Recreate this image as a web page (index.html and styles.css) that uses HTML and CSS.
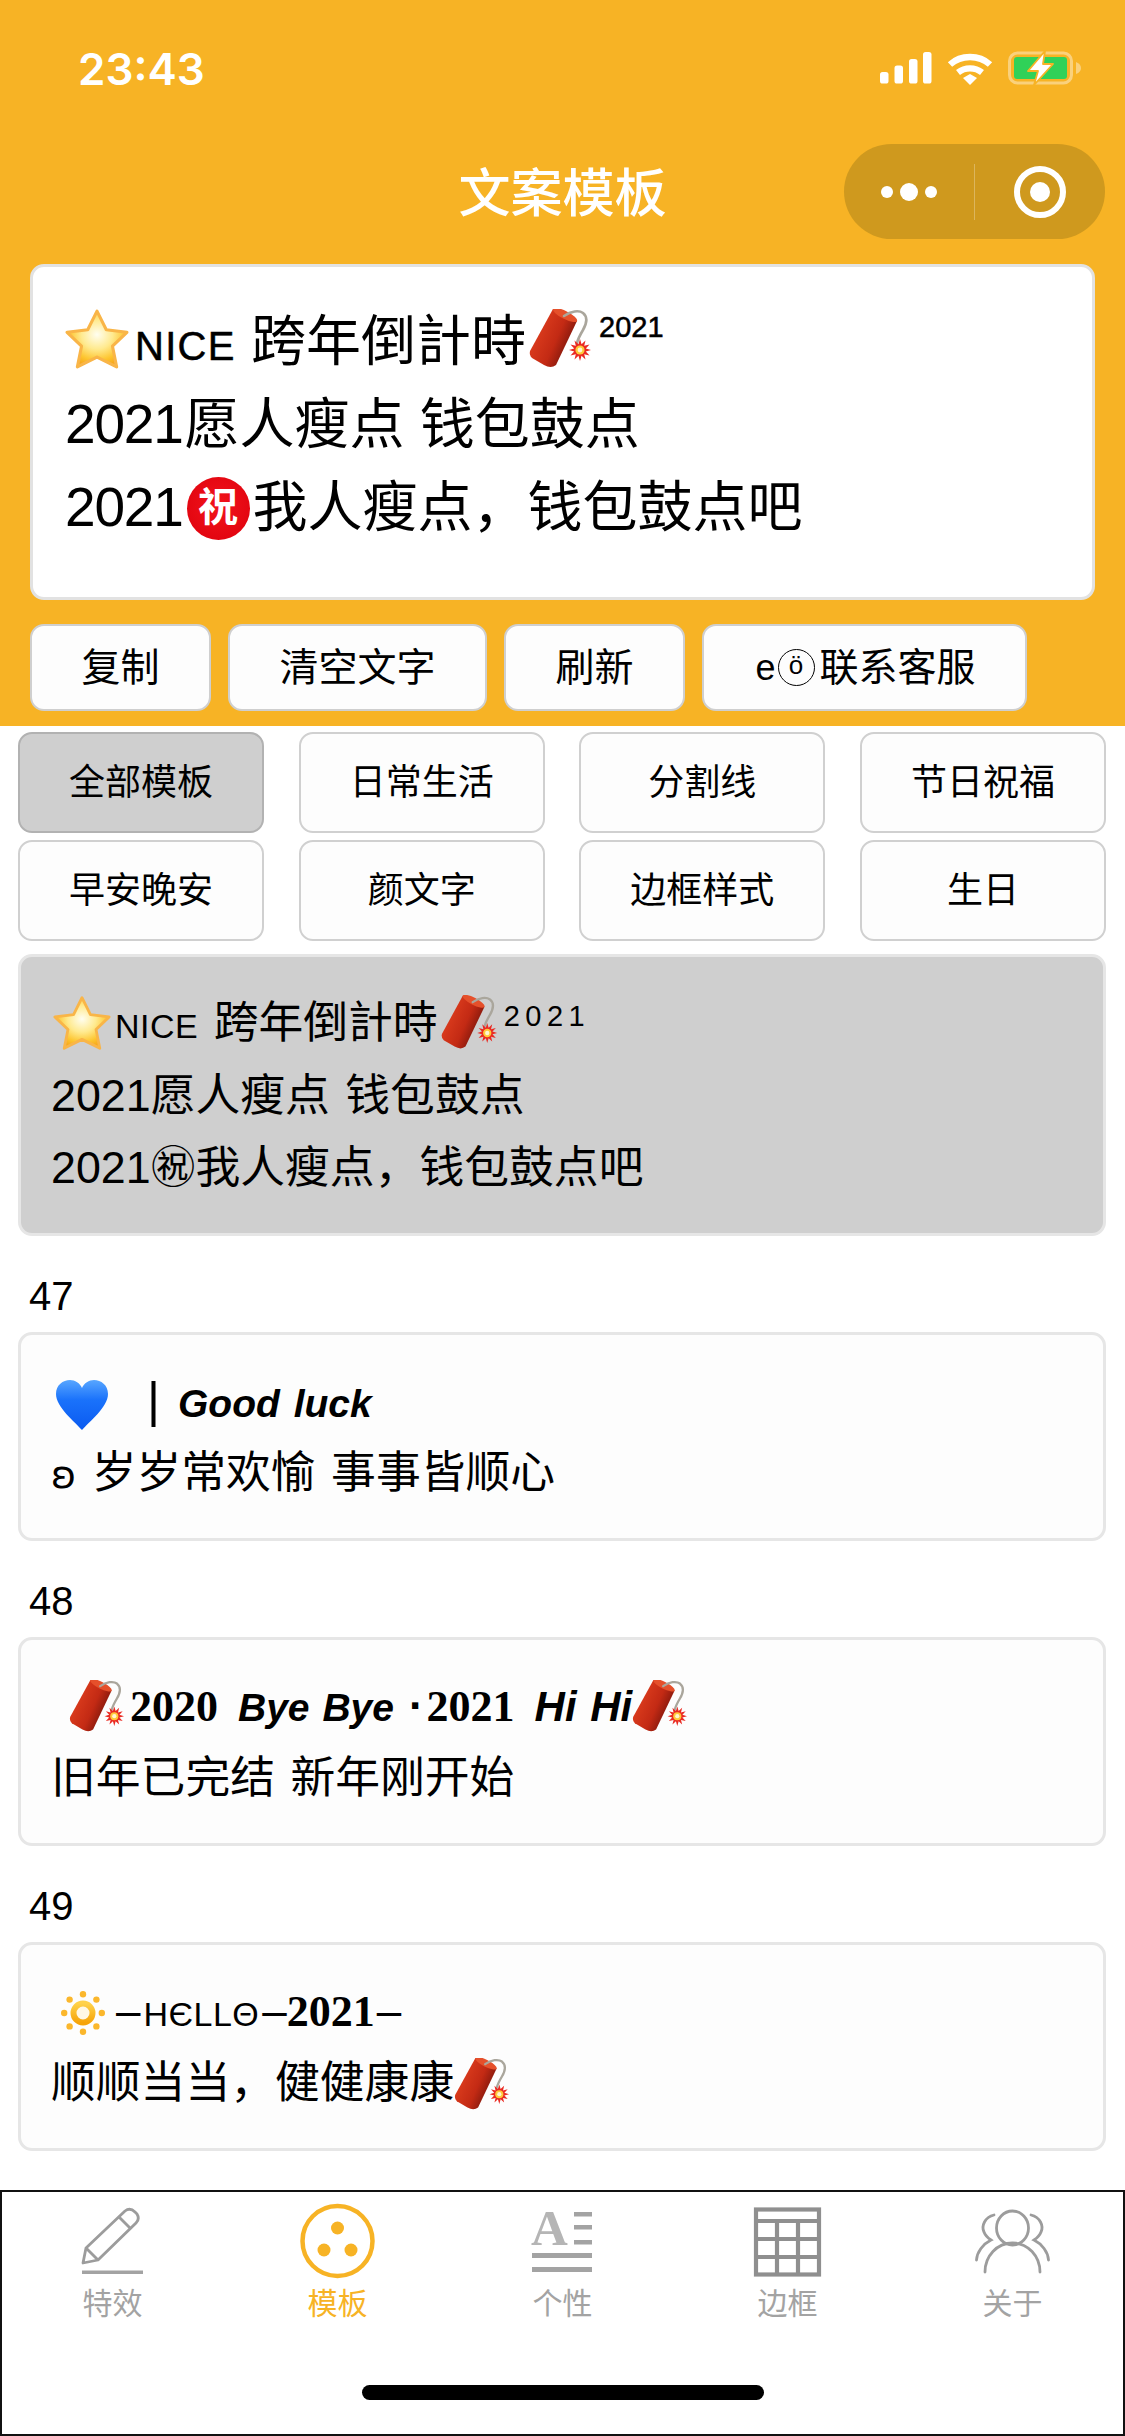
FILE: index.html
```html
<!DOCTYPE html>
<html lang="zh-CN">
<head>
<meta charset="utf-8">
<title>文案模板</title>
<link rel="stylesheet" href="styles.css">
</head>
<body>
<svg class="sprite" width="0" height="0" aria-hidden="true">
  <defs>
    <linearGradient id="fcBody" x1="0" y1="0" x2="1" y2="0.55">
      <stop offset="0" stop-color="#b3200f"/>
      <stop offset="0.3" stop-color="#d93a1c"/>
      <stop offset="0.65" stop-color="#c32a14"/>
      <stop offset="1" stop-color="#6f120a"/>
    </linearGradient>
    <radialGradient id="starFill" cx="50%" cy="42%" r="58%">
      <stop offset="0" stop-color="#fffef0"/>
      <stop offset="0.45" stop-color="#ffea8f"/>
      <stop offset="0.8" stop-color="#fdc52f"/>
      <stop offset="1" stop-color="#f7a81b"/>
    </radialGradient>
    <linearGradient id="heartFill" x1="0" y1="0" x2="0" y2="1">
      <stop offset="0" stop-color="#58a6ff"/>
      <stop offset="0.4" stop-color="#1a72fb"/>
      <stop offset="1" stop-color="#0a5af0"/>
    </linearGradient>
    <linearGradient id="sunRing" x1="0" y1="0" x2="0" y2="1">
      <stop offset="0" stop-color="#ffd24a"/>
      <stop offset="1" stop-color="#f6a408"/>
    </linearGradient>
    <symbol id="cracker" viewBox="0 0 64 60">
      <path d="M24 0 48 12 27 56Q22 60 15 56L3 49Q0 46 1 42Z" fill="url(#fcBody)"/>
      <ellipse cx="36" cy="6" rx="13.500" ry="4" transform="rotate(27 36 6)" fill="#e5502b"/>
      <path d="M35 7C42 2 50 1 54 4 59 8 58 14 54 21 51 26 49 30 48 34" fill="none" stroke="#aaa69c" stroke-width="2.600" stroke-linecap="round"/>
      <g transform="translate(51 41)">
        <polygon fill="#ea2a22" points="0,-11 1.55,-5.8 5.5,-9.5 4.2,-4.2 9.5,-5.5 5.8,-1.55 11,0 5.8,1.55 9.5,5.5 4.2,4.2 5.5,9.5 1.55,5.8 0,11 -1.55,5.8 -5.5,9.5 -4.2,4.2 -9.5,5.5 -5.8,1.55 -11,0 -5.8,-1.55 -9.5,-5.5 -4.2,-4.2 -5.5,-9.5 -1.55,-5.8"/>
        <circle r="4.600" fill="#ffc93a"/>
        <circle r="2.400" fill="#fff6d0"/>
      </g>
    </symbol>
    <symbol id="star" viewBox="0 0 62 58">
      <polygon points="31,2 40,20 60,22.5 46,36 50,56 31,46.5 12,56 16,36 2,22.5 22,20" fill="url(#starFill)" stroke="#f9b548" stroke-width="3" stroke-linejoin="round"/>
    </symbol>
    <symbol id="heart" viewBox="0 0 54 52">
      <path d="M27 51C20 43 1 28 1 15 1 6 8 1 15 1 20 1 25 4 27 9 29 4 34 1 39 1 46 1 53 6 53 15 53 28 34 43 27 51Z" fill="url(#heartFill)"/>
    </symbol>
    <symbol id="sun" viewBox="0 0 44 44">
      <circle cx="22" cy="22" r="9.500" fill="#fff8e4" stroke="url(#sunRing)" stroke-width="6"/>
      <g fill="#fbb72c">
        <circle cx="22" cy="3.200" r="3.200"/><circle cx="35.400" cy="8.600" r="3.200"/><circle cx="40.800" cy="22" r="3.200"/><circle cx="35.400" cy="35.400" r="3.200"/>
        <circle cx="22" cy="40.800" r="3.200"/><circle cx="8.600" cy="35.400" r="3.200"/><circle cx="3.200" cy="22" r="3.200"/><circle cx="8.600" cy="8.600" r="3.200"/>
      </g>
    </symbol>
  </defs>
</svg>

<div class="page">
  <header class="top">
    <div class="status">
      <span class="time">23:43</span>
      <div class="status-icons">
        <svg class="i-signal" viewBox="0 0 52 32"><g fill="#fff"><rect x="0" y="20" width="8.500" height="11.500" rx="2.600"/><rect x="14.500" y="13.500" width="8.500" height="18" rx="2.600"/><rect x="29" y="7" width="8.500" height="24.500" rx="2.600"/><rect x="43" y="0" width="8.500" height="31.500" rx="2.600"/></g></svg>
        <svg class="i-wifi" viewBox="0 0 46 33"><g fill="none" stroke="#fff" stroke-width="6.400"><path d="M3 12.500C14 2.500 32 2.500 43 12.500"/><path d="M11 20.500C18 15 28 15 35 20.500"/></g><polygon fill="#fff" points="16,26 23,22 30,26 23,33"/></svg>
        <svg class="i-battery" viewBox="0 0 74 34"><rect x="1.500" y="2" width="62" height="30" rx="8" fill="none" stroke="#fff" stroke-opacity=".4" stroke-width="3"/><rect x="6" y="6" width="53" height="22" rx="3" fill="#30d158"/><path d="M68 11Q73 13 73 17 73 21 68 23Z" fill="#fff" fill-opacity=".4"/><polygon points="37,0 20,20 30,20 26,34 45,13 35,13" fill="#fff" stroke="#f7b325" stroke-width="1.800" stroke-linejoin="round"/></svg>
      </div>
    </div>
    <div class="nav">
      <h1 class="title">文案模板</h1>
      <div class="capsule">
        <div class="cap-part">
          <svg class="i-dots" viewBox="0 0 56 20"><g fill="#fff"><circle cx="6" cy="10" r="6"/><circle cx="28" cy="10" r="9"/><circle cx="50" cy="10" r="6"/></g></svg>
        </div>
        <span class="cap-div"></span>
        <div class="cap-part">
          <svg class="i-target" viewBox="0 0 52 52"><circle cx="26" cy="26" r="23" fill="none" stroke="#fff" stroke-width="6"/><circle cx="26" cy="26" r="10" fill="#fff"/></svg>
        </div>
      </div>
    </div>
    <div class="editor">
      <p class="e-line"><svg class="em em-l"><use href="#star"/></svg><span class="nice">NICE</span> 跨年倒計時<svg class="em em-l em-fc"><use href="#cracker"/></svg><span class="sup">2021</span></p>
      <p class="e-line"><span class="d">2021</span>愿人瘦点 钱包鼓点</p>
      <p class="e-line"><span class="d">2021</span><span class="seal">祝</span>我人瘦点，钱包鼓点吧</p>
    </div>
    <div class="actions">
      <button class="btn">复制</button>
      <button class="btn">清空文字</button>
      <button class="btn">刷新</button>
      <button class="btn btn-face"><span class="face-e">e</span><span class="face-o">ö</span><span>联系客服</span></button>
    </div>
  </header>

  <main class="content">
    <nav class="cats">
      <button class="cat cat-on">全部模板</button>
      <button class="cat">日常生活</button>
      <button class="cat">分割线</button>
      <button class="cat">节日祝福</button>
      <button class="cat">早安晚安</button>
      <button class="cat">颜文字</button>
      <button class="cat">边框样式</button>
      <button class="cat">生日</button>
    </nav>

    <article class="card card-on">
      <p class="line"><svg class="em em-m em-m-star"><use href="#star"/></svg><span class="nice nice-m">NICE</span> 跨年倒計時<svg class="em em-m em-fc"><use href="#cracker"/></svg><span class="sup sup-m">2021</span></p>
      <p class="line">2021愿人瘦点 钱包鼓点</p>
      <p class="line">2021㊗我人瘦点，钱包鼓点吧</p>
    </article>

    <div class="num">47</div>
    <article class="card">
      <p class="line"><svg class="em em-heart"><use href="#heart"/></svg><span class="bar lift">|</span><span class="bi lift">Good luck</span></p>
      <p class="line"><span class="curl">ʚ</span> 岁岁常欢愉 事事皆顺心</p>
    </article>

    <div class="num">48</div>
    <article class="card">
      <p class="line"><svg class="em em-s em-lead"><use href="#cracker"/></svg><span class="sb">2020</span><span class="bi bi-gap">Bye Bye</span><span class="dot">·</span><span class="sb">2021</span><span class="bi bi-gap bi-hi">Hi Hi</span><svg class="em em-s"><use href="#cracker"/></svg></p>
      <p class="line">旧年已完结 新年刚开始</p>
    </article>

    <div class="num">49</div>
    <article class="card">
      <p class="line"><svg class="em em-sun"><use href="#sun"/></svg><span class="dash">–</span><span class="hello">HЄLLΘ</span><span class="dash">–</span><span class="sb">2021</span><span class="dash dash-end">–</span></p>
      <p class="line">顺顺当当，健健康康<svg class="em em-s"><use href="#cracker"/></svg></p>
    </article>
  </main>

  <footer class="tabbar">
    <div class="tabs">
      <div class="tab">
        <svg class="tab-ic" viewBox="0 0 75 75"><g fill="none" stroke="#9c9c9c" stroke-width="2.800" stroke-linejoin="round"><path d="M8 59 11 44 50 7Q55 3 60 8L62 10Q65 15 61 19L23 56Z"/><path d="M11 44 23 56"/><path d="M44 13 56 25"/></g><rect x="7" y="66.500" width="61" height="3.500" fill="#a3a3a3"/></svg>
        <span class="tab-t">特效</span>
      </div>
      <div class="tab tab-on">
        <svg class="tab-ic" viewBox="0 0 75 75"><circle cx="37.500" cy="37" r="35" fill="none" stroke="#f7b325" stroke-width="4.500"/><g fill="#f7b325"><circle cx="37.500" cy="24" r="6.500"/><circle cx="24" cy="46" r="6.500"/><circle cx="51" cy="46" r="6.500"/></g></svg>
        <span class="tab-t">模板</span>
      </div>
      <div class="tab">
        <svg class="tab-ic" viewBox="0 0 75 75"><text x="6" y="41" class="ic-a">A</text><g fill="#a3a3a3"><rect x="49" y="8" width="18" height="4.500"/><rect x="49" y="21" width="18" height="4.500"/><rect x="49" y="36" width="18" height="4.500"/><rect x="7" y="49" width="60" height="5"/><rect x="7" y="63" width="60" height="5"/></g></svg>
        <span class="tab-t">个性</span>
      </div>
      <div class="tab">
        <svg class="tab-ic" viewBox="0 0 75 75"><g fill="none" stroke="#8f8f8f" stroke-width="4.200"><rect x="6" y="5.500" width="63" height="65"/><path d="M6 17H69M6 35H69M6 53H69M27 17V70.500M48 17V70.500"/></g></svg>
        <span class="tab-t">边框</span>
      </div>
      <div class="tab">
        <svg class="tab-ic" viewBox="0 0 75 75"><g fill="none" stroke="#9c9c9c" stroke-width="2.800" stroke-linecap="round"><ellipse cx="37.500" cy="24" rx="16" ry="17"/><path d="M10 68C10 52 22 39 37.500 39S65 52 65 68"/><path d="M19 11C10 13 6 22 9 28 10.500 32 13 34 16 36 8 40 2 48 1.500 56"/><path d="M56 11C65 13 69 22 66 28 64.500 32 62 34 59 36 67 40 73 48 73.500 56"/></g></svg>
        <span class="tab-t">关于</span>
      </div>
    </div>
    <div class="home"></div>
  </footer>
</div>
</body>
</html>
```

FILE: styles.css
```css
* { box-sizing: border-box; }
html, body { margin: 0; padding: 0; }
body {
  width: 1125px;
  height: 2436px;
  overflow: hidden;
  background: #fff;
  color: #000;
  font-family: "Liberation Sans", "Noto Sans CJK SC", sans-serif;
}
p, h1 { margin: 0; font-weight: 400; }
button { font: inherit; color: inherit; margin: 0; }
.sprite { position: absolute; }

.page { height: 2436px; display: flex; flex-direction: column; }

/* top amber panel */
.top {
  height: 726px;
  flex: none;
  background: #f7b325;
  padding: 0 30px 0;
  display: flex;
  flex-direction: column;
}
.status {
  height: 136px;
  margin: 0 -30px;
  padding: 0 43px 0 78px;
  display: flex;
  justify-content: space-between;
  align-items: center;
}
.time {
  font-family: Inter, sans-serif;
  font-size: 44px;
  font-weight: 600;
  color: #fff;
  line-height: 1;
  margin-top: 2px;
}
.status-icons { display: flex; align-items: center; gap: 15px; }
.i-signal { width: 52px; height: 32px; }
.i-wifi { width: 46px; height: 33px; }
.i-battery { width: 74px; height: 34px; }

.nav {
  height: 95px;
  margin: 8px -30px 0;
  display: grid;
  grid-template-columns: 281px 1fr 281px;
  align-items: center;
}
.title {
  grid-column: 2;
  font-size: 52px;
  line-height: 89px;
  padding-top: 6px;
  font-weight: 500;
  color: #fff;
  text-align: center;
}
.capsule {
  grid-column: 3;
  justify-self: start;
  width: 261px;
  height: 95px;
  border-radius: 48px;
  background: #cf991e;
  display: flex;
  align-items: center;
}
.cap-part { flex: 1; display: flex; align-items: center; justify-content: center; }
.cap-div { width: 1px; height: 56px; background: rgba(255,255,255,.28); }
.i-dots { width: 56px; height: 20px; }
.i-target { width: 52px; height: 52px; }

.editor {
  margin-top: 25px;
  height: 336px;
  background: #fff;
  border: 3px solid #e2e2e2;
  border-radius: 14px;
  padding: 33px 32px 0;
}
.e-line { font-size: 55px; line-height: 83px; height: 83px; white-space: nowrap; }
.d { letter-spacing: -1.200px; margin-right: 2px; }

.em { display: inline-block; vertical-align: middle; }
.em-l { width: 64px; height: 60px; margin-top: -12px; }
.em-fc { margin-left: 3px; }
.nice { font-size: 40px; margin-left: 6px; letter-spacing: 1.300px; -webkit-text-stroke: .5px #000; }
.sup {
  font-size: 29px;
  font-weight: 500;
  margin-left: 6px;
  vertical-align: 23px;
  line-height: 1;
  -webkit-text-stroke: .5px #000;
}
.seal {
  display: inline-block;
  width: 63px;
  height: 63px;
  margin: 0 3px 0 2px;
  border-radius: 50%;
  background: radial-gradient(circle at 50% 45%, #f2141c, #dd000c);
  color: #fff;
  font-size: 40px;
  font-weight: 700;
  line-height: 61px;
  text-align: center;
  vertical-align: 5px;
}

.actions { margin-top: 24px; display: flex; gap: 17px; }
.btn {
  height: 87px;
  padding: 0 49.500px;
  background: #fdfdfd;
  border: 2px solid #cfcfcf;
  border-radius: 14px;
  font-size: 39px;
  line-height: 1;
  display: flex;
  align-items: center;
  white-space: nowrap;
}
.face-e { font-size: 36px; line-height: 1; margin: 0 2px 0 2px; }
.face-o {
  width: 37px;
  height: 37px;
  margin-right: 5px;
  border: 1.500px solid #000;
  border-radius: 50%;
  font-size: 26px;
  line-height: 31px;
  text-align: center;
}

/* scrolling content */
.content {
  flex: 1;
  min-height: 0;
  padding: 6px 19px 0 18px;
  overflow: hidden;
}
.cats {
  display: grid;
  grid-template-columns: repeat(4, 246px);
  justify-content: space-between;
  grid-auto-rows: 101px;
  row-gap: 7px;
}
.cat {
  background: #fdfdfd;
  border: 2px solid #d0d0d0;
  border-radius: 14px;
  font-size: 36px;
  line-height: 1;
  padding: 0;
}
.cat-on { background: #cfcfcf; border-color: #b2b2b2; }

.card {
  background: #fdfdfd;
  border: 3px solid #e6e6e6;
  border-radius: 14px;
  padding: 29px 30px;
  font-size: 44.800px;
}
.card-on { margin-top: 13px; background: #cfcfcf; }
.line { line-height: 72.500px; height: 72.500px; white-space: nowrap; word-spacing: 3px; }
.num {
  font-size: 40px;
  line-height: 52px;
  padding-top: 34px;
  margin-left: 11px;
  height: 96px;
}
.em-m { width: 58px; height: 56px; margin-top: -6px; }
.em-m-star { margin-left: 2px; }
.nice-m { font-size: 34px; margin-left: 4px; letter-spacing: .5px; -webkit-text-stroke: 0; }
.sup-m { font-weight: 400; letter-spacing: 5.500px; margin-left: 5px; vertical-align: 12px; -webkit-text-stroke: 0; }

.em-heart { width: 54px; height: 52px; margin: -6px 0 0 4px; }
.bar { font-size: 50px; font-weight: 400; margin: 0 18px 0 38px; }
.bi { font-style: italic; font-weight: 700; font-size: 39px; }
.lift { vertical-align: 3px; }
.curl { font-family: "DejaVu Sans", sans-serif; font-size: 38px; }

.em-s { width: 57px; height: 53px; margin-top: -4px; }
.em-lead { margin: -4px 4px 0 18px; }
.sb { font-family: "Liberation Serif", serif; font-weight: 700; font-size: 44px; }
.bi-gap { margin-left: 20px; word-spacing: 2px; }
.bi-hi { font-size: 42px; }
.dot { font-weight: 700; font-size: 44px; margin: 0 3px 0 15px; }

.em-sun { width: 44px; height: 44px; margin: -2px 11px 0 10px; }
.dash { font-size: 44px; }
.dash-end { margin-left: 2px; }
.hello { font-size: 34px; margin: 0 3px; letter-spacing: .5px; }

/* bottom tabs */
.tabbar {
  flex: none;
  height: 246px;
  background: #fff;
  border: 2px solid #111;
  display: flex;
  flex-direction: column;
  align-items: center;
}
.tabs { align-self: stretch; margin: 0 -2px; display: grid; grid-template-columns: repeat(5, 1fr); padding-top: 12px; }
.tab { display: flex; flex-direction: column; align-items: center; color: #a3a3a3; }
.tab-on { color: #f7b325; }
.tab-ic { width: 75px; height: 75px; overflow: visible; filter: blur(.4px); }
.tab-t { font-size: 30px; line-height: 30px; height: 30px; margin-top: 10px; }
.ic-a { font-family: "Liberation Serif", serif; font-weight: 700; font-size: 51px; fill: #b5b5b5; }
.home { width: 402px; height: 15px; margin-top: 66px; background: #000; border-radius: 8px; }
```
